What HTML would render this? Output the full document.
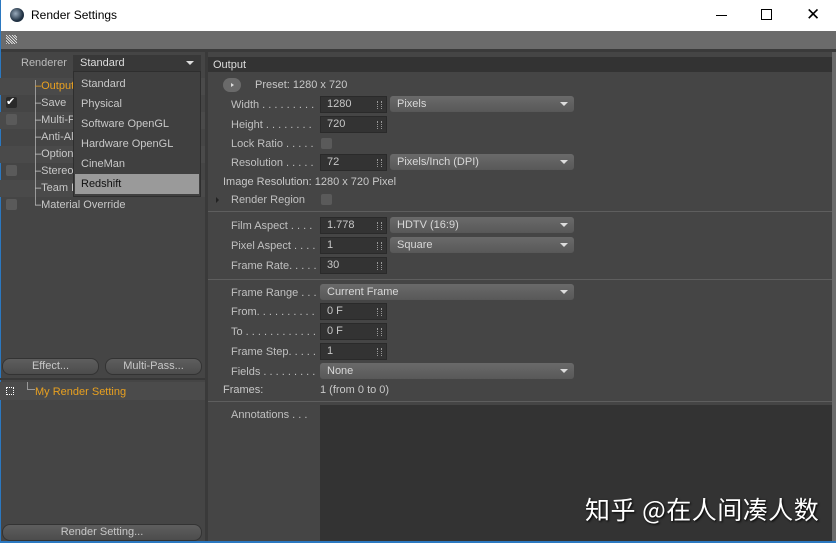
<!DOCTYPE html>
<html><head><meta charset="utf-8"><style>
*{box-sizing:border-box;margin:0;padding:0}
body{width:836px;height:543px;overflow:hidden;background:#454545;font-family:"Liberation Sans","Noto Sans CJK SC",sans-serif;font-size:11px;color:#c8c8c8;position:relative}
.a{position:absolute;white-space:nowrap}
.num{position:absolute;left:320px;width:67px;height:17px;background:#333;border:1px solid #2a2a2a;padding:0 0 0 6px;line-height:15px;color:#c8c8c8}
.num:after{content:"";position:absolute;right:4px;top:4px;width:3px;height:8px;border-left:1px dotted #999;border-right:1px dotted #999}
.dd{position:absolute;left:390px;width:184px;height:16px;background:linear-gradient(#6a6a6a,#585858);border-radius:3px;padding:0 0 0 7px;line-height:16px;color:#d8d8d8}
.dd:after{content:"";position:absolute;right:6px;top:6px;border:4px solid transparent;border-top:4px solid #ddd}
.lbl{position:absolute;left:231px;color:#c0c0c0}
.cb{position:absolute;width:11px;height:11px;background:#5a5a5a;border-radius:2px}
.btn{position:absolute;height:17px;background:linear-gradient(#5e5e5e,#4c4c4c);border:1px solid #333;border-radius:8px;text-align:center;line-height:15px;color:#c8c8c8}
.row{position:absolute;left:0;width:205px;height:17px}
</style></head><body>
<div class="a" style="left:0;top:0;width:836px;height:31px;background:#fff"></div>
<div class="a" style="left:10px;top:8px;width:14px;height:14px;border-radius:50%;background:radial-gradient(circle at 40% 40%,#9ab,#234 60%,#123)"></div>
<div class="a" style="left:31px;top:8px;font-size:12px;color:#000">Render Settings</div>
<div class="a" style="left:716px;top:15px;width:11px;height:1px;background:#000"></div>
<div class="a" style="left:761px;top:9px;width:11px;height:11px;border:1px solid #000"></div>
<div class="a" style="left:806px;top:5px;font-size:17px;color:#000">✕</div>
<div class="a" style="left:0;top:31px;width:836px;height:18px;background:#6b6b6b"></div>
<div class="a" style="left:6px;top:35px;width:11px;height:9px;background:repeating-linear-gradient(45deg,#ddd 0 1px,#555 1px 2px)"></div>
<div class="a" style="left:0;top:49px;width:836px;height:3px;background:#3a3a3a"></div>
<div class="a" style="left:0;top:0;width:1px;height:543px;background:#2b78c0"></div>
<div class="a" style="left:0;top:541px;width:836px;height:2px;background:#2b78c0"></div>
<div class="a" style="left:832px;top:52px;width:4px;height:489px;background:#6b6b6b"></div>
<div class="a" style="left:205px;top:52px;width:3px;height:489px;background:#3a3a3a"></div>
<div class="a" style="left:21px;top:57px;color:#bbb">Renderer</div>
<div class="a" style="left:73px;top:55px;width:128px;height:16px;background:#383838;color:#ddd;padding:0 0 0 7px;line-height:16px">Standard</div>
<div class="a" style="left:186px;top:61px;border:4px solid transparent;border-top:4px solid #ddd"></div>
<div class="row" style="top:78px;background:#4a4a4a"></div>
<div class="row" style="top:112px;background:#4a4a4a"></div>
<div class="row" style="top:146px;background:#4a4a4a"></div>
<div class="row" style="top:180px;background:#4a4a4a"></div>
<div class="a" style="left:35px;top:80px;width:1px;height:125px;background:#999"></div>
<div class="a" style="left:35px;top:80px;color:#e8a020">–Output</div>
<div class="a" style="left:35px;top:97px">–Save</div>
<div class="a" style="left:35px;top:114px">–Multi-Pass</div>
<div class="a" style="left:35px;top:131px">–Anti-Aliasing</div>
<div class="a" style="left:35px;top:148px">–Options</div>
<div class="a" style="left:35px;top:165px">–Stereoscopic</div>
<div class="a" style="left:35px;top:182px">–Team Render</div>
<div class="a" style="left:35px;top:199px">–Material Override</div>
<div class="cb" style="left:6px;top:97px;background:#2a2a2a;color:#fff;font-size:11px;line-height:10px">✔</div>
<div class="cb" style="left:6px;top:114px"></div>
<div class="cb" style="left:6px;top:165px"></div>
<div class="cb" style="left:6px;top:199px"></div>
<div class="a" style="left:73px;top:71px;width:128px;height:126px;background:#404040;border:1px solid #2e2e2e"></div>
<div class="a" style="left:81px;top:78px">Standard</div>
<div class="a" style="left:81px;top:98px">Physical</div>
<div class="a" style="left:81px;top:118px">Software OpenGL</div>
<div class="a" style="left:81px;top:138px">Hardware OpenGL</div>
<div class="a" style="left:81px;top:158px">CineMan</div>
<div class="a" style="left:75px;top:174px;width:124px;height:20px;background:#9a9a9a"></div>
<div class="a" style="left:81px;top:178px;color:#111">Redshift</div>
<div class="btn" style="left:2px;top:358px;width:97px">Effect...</div>
<div class="btn" style="left:105px;top:358px;width:97px">Multi-Pass...</div>
<div class="a" style="left:0;top:378px;width:205px;height:2px;background:#383838"></div>
<div class="a" style="left:0;top:382px;width:205px;height:18px;background:#4b4b4b"></div>
<div class="a" style="left:6px;top:387px;width:8px;height:8px;border:1px dotted #fff"></div>
<div class="a" style="left:27px;top:382px;width:1px;height:8px;background:#999"></div>
<div class="a" style="left:27px;top:389px;width:8px;height:1px;background:#999"></div>
<div class="a" style="left:35px;top:386px;color:#e8a020">My Render Setting</div>
<div class="btn" style="left:2px;top:524px;width:200px">Render Setting...</div>
<div class="a" style="left:208px;top:57px;width:624px;height:15px;background:#333"></div>
<div class="a" style="left:213px;top:59px;color:#ddd">Output</div>
<div class="a" style="left:223px;top:78px;width:18px;height:14px;border-radius:7px;background:#6a6a6a"></div>
<div class="a" style="left:231px;top:83px;border:2px solid transparent;border-left:3px solid #ddd"></div>
<div class="a" style="left:255px;top:79px">Preset: 1280 x 720</div>
<div class="lbl" style="top:99px">Width . . . . . . . . .</div><div class="num" style="top:96px">1280</div><div class="dd" style="top:96px">Pixels</div>
<div class="lbl" style="top:119px">Height . . . . . . . .</div><div class="num" style="top:116px">720</div>
<div class="lbl" style="top:138px">Lock Ratio . . . . .</div><div class="cb" style="left:321px;top:138px"></div>
<div class="lbl" style="top:157px">Resolution . . . . .</div><div class="num" style="top:154px">72</div><div class="dd" style="top:154px">Pixels/Inch (DPI)</div>
<div class="a" style="left:223px;top:176px">Image Resolution: 1280 x 720 Pixel</div>
<div class="a" style="left:216px;top:197px;border:3px solid transparent;border-left:3px solid #222"></div>
<div class="lbl" style="top:194px">Render Region</div><div class="cb" style="left:321px;top:194px"></div>
<div class="a" style="left:208px;top:211px;width:624px;height:1px;background:#5e5e5e"></div>
<div class="lbl" style="top:220px">Film Aspect . . . .</div><div class="num" style="top:217px">1.778</div><div class="dd" style="top:217px">HDTV (16:9)</div>
<div class="lbl" style="top:240px">Pixel Aspect . . . .</div><div class="num" style="top:237px">1</div><div class="dd" style="top:237px">Square</div>
<div class="lbl" style="top:260px">Frame Rate. . . . .</div><div class="num" style="top:257px">30</div>
<div class="a" style="left:208px;top:279px;width:624px;height:1px;background:#5e5e5e"></div>
<div class="lbl" style="top:287px">Frame Range . . .</div><div class="dd" style="top:284px;left:320px;width:254px">Current Frame</div>
<div class="lbl" style="top:306px">From. . . . . . . . . .</div><div class="num" style="top:303px">0 F</div>
<div class="lbl" style="top:326px">To . . . . . . . . . . . .</div><div class="num" style="top:323px">0 F</div>
<div class="lbl" style="top:346px">Frame Step. . . . .</div><div class="num" style="top:343px">1</div>
<div class="lbl" style="top:366px">Fields . . . . . . . . .</div><div class="dd" style="top:363px;left:320px;width:254px">None</div>
<div class="a" style="left:223px;top:384px">Frames:</div>
<div class="a" style="left:320px;top:384px">1 (from 0 to 0)</div>
<div class="a" style="left:208px;top:401px;width:624px;height:1px;background:#5e5e5e"></div>
<div class="lbl" style="top:409px">Annotations . . .</div>
<div class="a" style="left:320px;top:405px;width:512px;height:136px;background:#333"></div>
<div class="a" style="left:585px;top:491px;font-size:25px;letter-spacing:0.5px;color:#fff;font-family:'Noto Sans CJK SC',sans-serif;text-shadow:1px 1px 2px #000">知乎 @在人间凑人数</div>
</body></html>
